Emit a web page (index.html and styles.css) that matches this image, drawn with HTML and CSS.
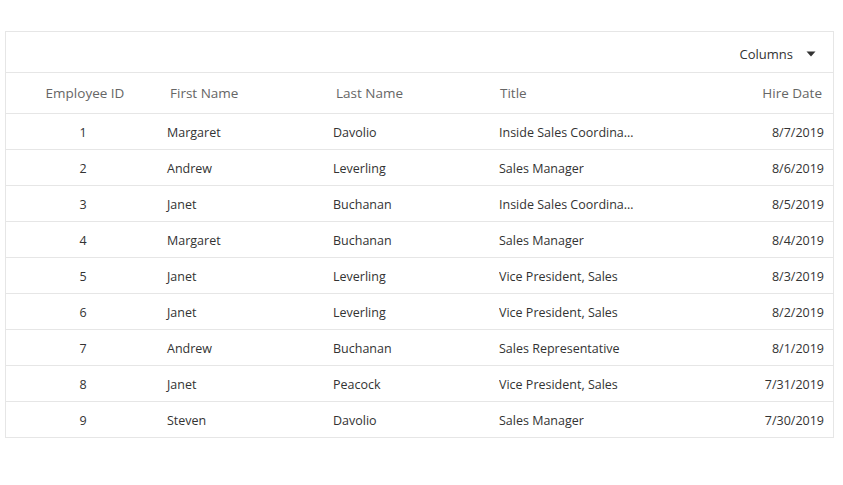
FILE: index.html
```html
<!DOCTYPE html>
<html>
<head>
<meta charset="utf-8">
<link rel="stylesheet" href="styles.css">
</head>
<body>
<div class="page">
  <div class="grid">
    <div class="toolbar">
      <button class="columns-btn">Columns
        <svg class="caret" width="10" height="6" viewBox="0 0 10 6"><path d="M0.5 0.5 L9.5 0.5 L5 5.5 Z" fill="#333"/></svg>
      </button>
    </div>
    <div class="row head">
      <div class="c c1">Employee ID</div>
      <div class="c c2">First Name</div>
      <div class="c c3">Last Name</div>
      <div class="c c4">Title</div>
      <div class="c c5">Hire Date</div>
    </div>
    <div class="row"><div class="c c1">1</div><div class="c c2">Margaret</div><div class="c c3">Davolio</div><div class="c c4"><span class="ell">Inside Sales Coordinator</span></div><div class="c c5">8/7/2019</div></div>
    <div class="row"><div class="c c1">2</div><div class="c c2">Andrew</div><div class="c c3">Leverling</div><div class="c c4"><span class="ell">Sales Manager</span></div><div class="c c5">8/6/2019</div></div>
    <div class="row"><div class="c c1">3</div><div class="c c2">Janet</div><div class="c c3">Buchanan</div><div class="c c4"><span class="ell">Inside Sales Coordinator</span></div><div class="c c5">8/5/2019</div></div>
    <div class="row"><div class="c c1">4</div><div class="c c2">Margaret</div><div class="c c3">Buchanan</div><div class="c c4"><span class="ell">Sales Manager</span></div><div class="c c5">8/4/2019</div></div>
    <div class="row"><div class="c c1">5</div><div class="c c2">Janet</div><div class="c c3">Leverling</div><div class="c c4"><span class="ell">Vice President, Sales</span></div><div class="c c5">8/3/2019</div></div>
    <div class="row"><div class="c c1">6</div><div class="c c2">Janet</div><div class="c c3">Leverling</div><div class="c c4"><span class="ell">Vice President, Sales</span></div><div class="c c5">8/2/2019</div></div>
    <div class="row"><div class="c c1">7</div><div class="c c2">Andrew</div><div class="c c3">Buchanan</div><div class="c c4"><span class="ell">Sales Representative</span></div><div class="c c5">8/1/2019</div></div>
    <div class="row"><div class="c c1">8</div><div class="c c2">Janet</div><div class="c c3">Peacock</div><div class="c c4"><span class="ell">Vice President, Sales</span></div><div class="c c5">7/31/2019</div></div>
    <div class="row"><div class="c c1">9</div><div class="c c2">Steven</div><div class="c c3">Davolio</div><div class="c c4"><span class="ell">Sales Manager</span></div><div class="c c5">7/30/2019</div></div>
  </div>
</div>
</body>
</html>
```
FILE: styles.css
```css
html, body { margin: 0; padding: 0; background: #fff; }
body { font-family: "Open Sans", "Noto Sans", sans-serif; color: #333; }
.page { padding: 31px 0 0 5px; }
.grid {
  width: 827px;
  border: 1px solid #e6e6e6;
  border-bottom: none;
}
.toolbar {
  height: 41px;
  box-sizing: border-box;
  padding-top: 3px;
  padding-right: 17px;
  border-bottom: 1px solid #e6e6e6;
  display: flex;
  align-items: center;
  justify-content: flex-end;
}
.columns-btn {
  border: none;
  background: none;
  font: inherit;
  font-size: 13px;
  color: #333;
  display: flex;
  align-items: center;
  gap: 13px;
  padding: 0;
}
.caret { display: block; }
.row {
  display: flex;
  height: 35px;
  border-bottom: 1px solid #e6e6e6;
  font-size: 12.5px;
}
.row.head { height: 40px; font-size: 13.5px; color: #666; }
.c {
  display: flex;
  align-items: center;
  padding: 1px 7px 0;
  box-sizing: border-box;
  white-space: nowrap;
  overflow: hidden;
}
.head .c { padding-top: 0; }
.c1 { width: 154px; justify-content: center; }
.c2 { width: 166px; }
.c3 { width: 166px; }
.c4 { width: 152px; }
.c5 { width: 189px; justify-content: flex-end; padding-right: 9px; }
.head .c1 { padding-left: 11px; padding-right: 7px; }
.head .c2, .head .c3 { padding-left: 10px; }
.head .c4 { padding-left: 8px; }
.head .c5 { padding-right: 11px; }
.ell {
  display: block;
  min-width: 0;
  overflow: hidden;
  text-overflow: ellipsis;
  white-space: nowrap;
}
```
